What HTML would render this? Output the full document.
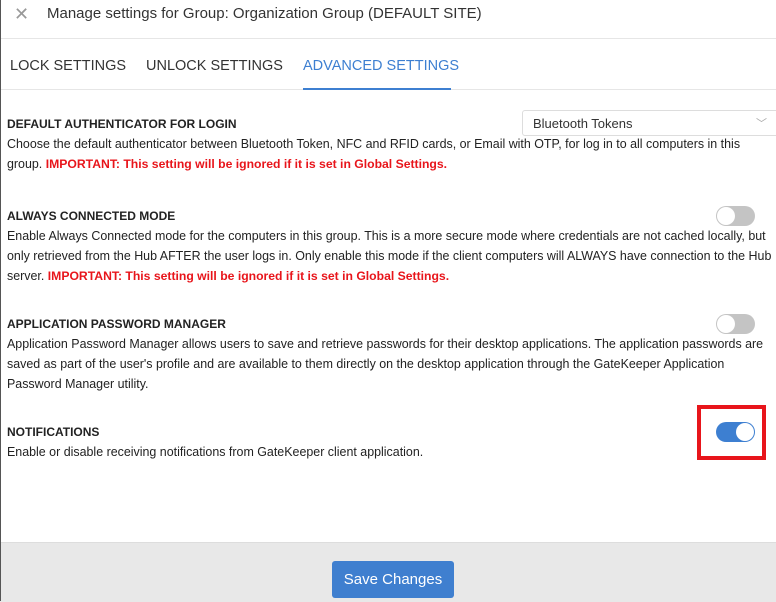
<!DOCTYPE html>
<html><head><style>
body{margin:0;width:776px;height:601px;overflow:hidden;background:#fff;font-family:"Liberation Sans",sans-serif;color:#222;position:relative}
.lb{position:absolute;left:0;top:0;width:1px;height:601px;background:#555}
.hdr{position:absolute;left:0;top:0;width:776px;height:38px;border-bottom:1px solid #e6e6e6}
.x{position:absolute;left:14px;top:4px;font-size:18px;color:#999}
.title{position:absolute;left:47px;top:5px;font-size:15px;color:#333}
.tabs{position:absolute;left:0;top:39px;width:776px;height:50px;border-bottom:1px solid #e6e6e6}
.tab{position:absolute;top:19px;font-size:14.5px;color:#333}
.act{color:#3d7fd1}
.ul{position:absolute;left:303px;top:88px;width:148px;height:2px;background:#3d7fd1}
.s{position:absolute;left:7px;font-size:12.45px;line-height:20px;width:775px}
.h{font-weight:bold;color:#222;font-size:12px}
.r{color:#e8151b;font-weight:bold;font-size:12.2px}
.sel{position:absolute;left:522px;top:110px;width:260px;height:26px;border:1px solid #ddd;border-radius:3px;box-sizing:border-box;font-size:13px;padding:5px 10px;color:#333}
.tg{position:absolute;left:716px;width:39px;height:20px;border-radius:10px;background:#c4c4c4}
.tg:after{content:"";position:absolute;left:1px;top:1px;width:18px;height:18px;border-radius:50%;background:#fff}
.on{background:#3d7fd1}.on:after{left:20px}
.box{position:absolute;left:697px;top:405px;width:69px;height:55px;border:4px solid #e8151b;box-sizing:border-box}
.ft{position:absolute;left:0;top:542px;width:776px;height:59px;background:#e8e8e8;border-top:1px solid #ddd}
.btn{position:absolute;left:332px;top:561px;width:122px;height:37px;background:#3f7fcf;border-radius:3px;color:#fff;font-size:15px;text-align:center;line-height:38px}
</style></head><body>
<div class="hdr"><span class="x">✕</span><span class="title">Manage settings for Group: Organization Group (DEFAULT SITE)</span></div>
<div class="tabs"><span class="tab" style="left:10px">LOCK SETTINGS</span><span class="tab" style="left:146px">UNLOCK SETTINGS</span><span class="tab act" style="left:303px">ADVANCED SETTINGS</span></div>
<div class="ul"></div>
<div class="sel">Bluetooth Tokens<span style="position:absolute;right:14px;top:4px;color:#aaa;font-size:11px">﹀</span></div>
<div class="s" style="top:114px"><span class="h">DEFAULT AUTHENTICATOR FOR LOGIN</span><br>Choose the default authenticator between Bluetooth Token, NFC and RFID cards, or Email with OTP, for log in to all computers in this<br>group. <span class="r">IMPORTANT: This setting will be ignored if it is set in Global Settings.</span></div>
<div class="s" style="top:206px"><span class="h">ALWAYS CONNECTED MODE</span><br>Enable Always Connected mode for the computers in this group. This is a more secure mode where credentials are not cached locally, but<br>only retrieved from the Hub AFTER the user logs in. Only enable this mode if the client computers will ALWAYS have connection to the Hub<br>server. <span class="r">IMPORTANT: This setting will be ignored if it is set in Global Settings.</span></div>
<div class="tg" style="top:206px"></div>
<div class="s" style="top:314px"><span class="h">APPLICATION PASSWORD MANAGER</span><br>Application Password Manager allows users to save and retrieve passwords for their desktop applications. The application passwords are<br>saved as part of the user's profile and are available to them directly on the desktop application through the GateKeeper Application<br>Password Manager utility.</div>
<div class="tg" style="top:314px"></div>
<div class="s" style="top:422px"><span class="h">NOTIFICATIONS</span><br>Enable or disable receiving notifications from GateKeeper client application.</div>
<div class="tg on" style="top:422px"></div>
<div class="box"></div>
<div class="ft"></div>
<div class="btn">Save Changes</div>
<div class="lb"></div>
</body></html>
